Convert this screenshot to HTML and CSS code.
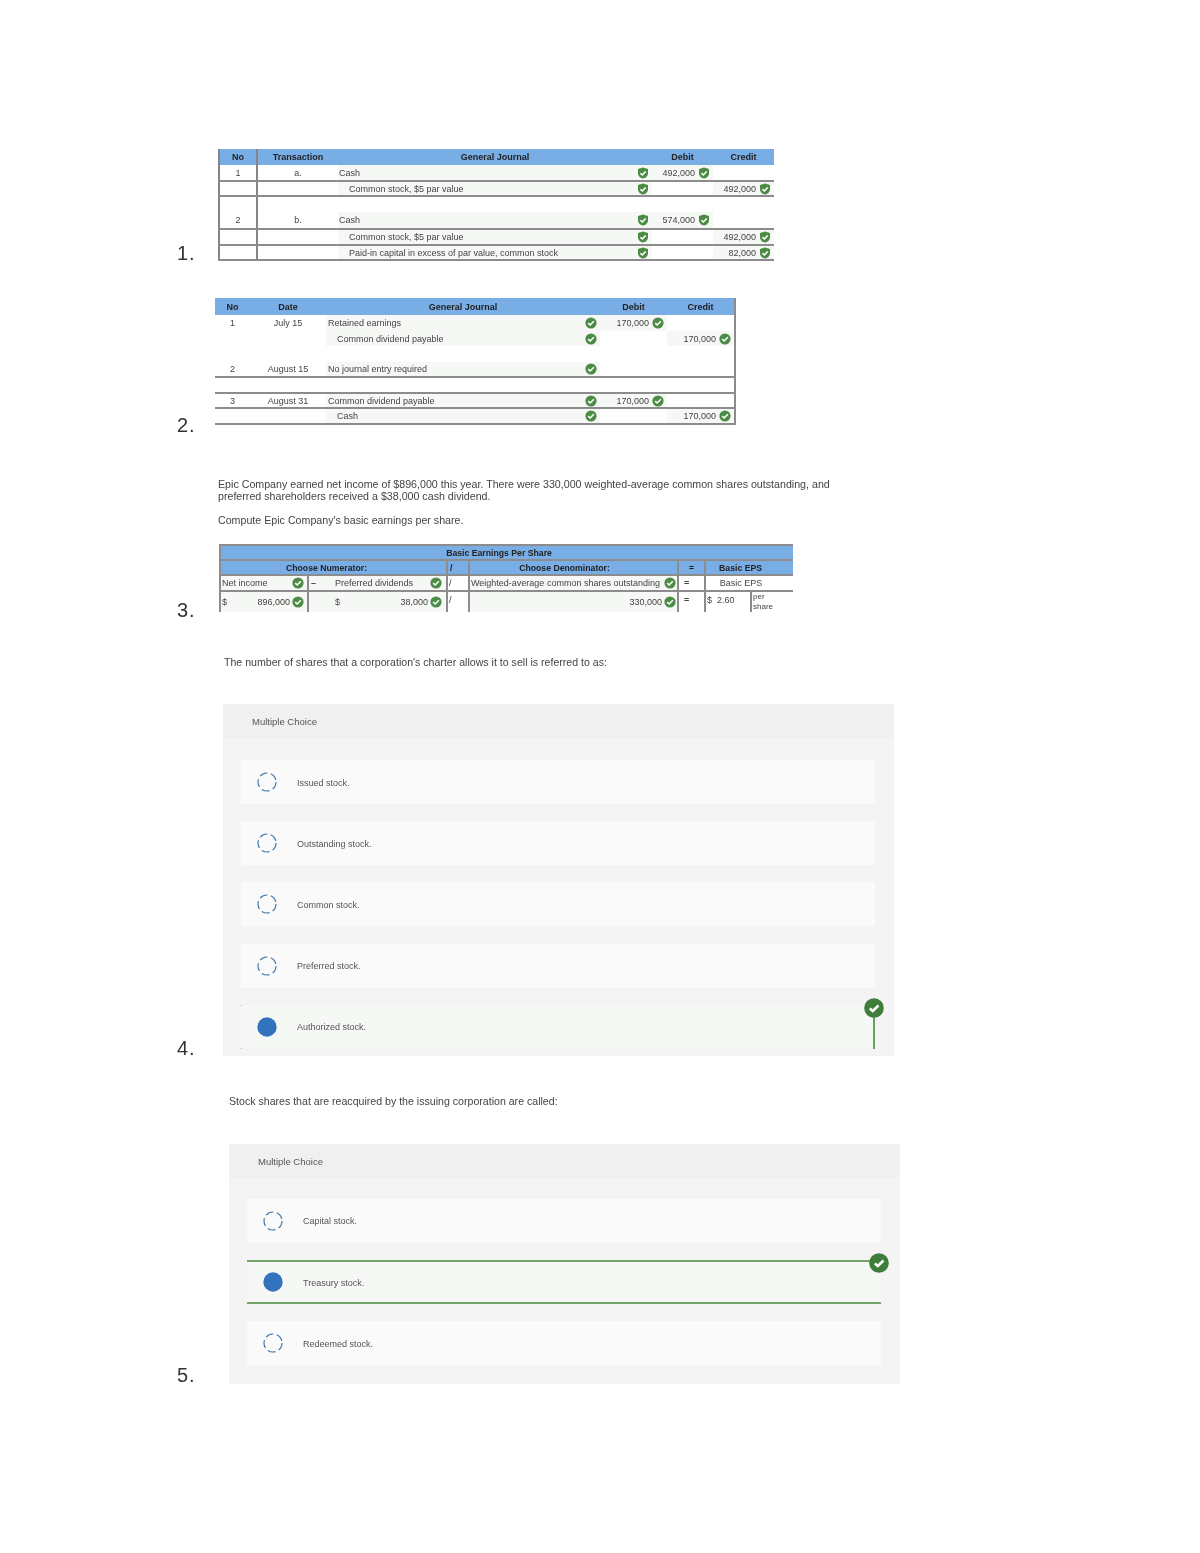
FILE: index.html
```html
<!DOCTYPE html>
<html lang="en">
<head>
<meta charset="utf-8">
<title>Stock and dividends answers</title>
<link rel="stylesheet" href="styles.css">
</head>
<body>
<svg class="defs" width="0" height="0" aria-hidden="true">
  <symbol id="ok" viewBox="0 0 12 12"><circle cx="6" cy="6" r="5.6" fill="#4c8c46"/><path d="M3.2 6.2 5.2 8 8.8 4.3" fill="none" stroke="#fff" stroke-width="1.6"/></symbol>
  <symbol id="shield" viewBox="0 0 12 12"><path d="M6 .4 11 2v4.200c0 3-2.400 4.600-5 5.400-2.600-.8-5-2.400-5-5.400V2z" fill="#4c8c46"/><path d="M3.400 6.200 5.300 7.900 8.700 4.400" fill="none" stroke="#fff" stroke-width="1.500"/></symbol>
  <symbol id="pin" viewBox="0 0 20 20"><circle cx="10" cy="10" r="9.800" fill="#3f7d3a"/><path d="M5.800 10.500 8.800 13 14.500 7.500" fill="none" stroke="#fff" stroke-width="2.600"/></symbol>
  <symbol id="off" viewBox="0 0 20 20"><circle cx="10" cy="10" r="9" fill="none" stroke="#3f78ad" stroke-width="1.200" stroke-dasharray="8 3.500"/></symbol>
  <symbol id="on" viewBox="0 0 20 20"><circle cx="10" cy="10" r="9.700" fill="#3373bd"/></symbol>
</svg>
<main class="page">

  <section class="item item-1">
    <div class="marker">1.</div>
    <div class="figure fig-1">
      <table class="journal j1">
        <colgroup><col class="c1-no"><col class="c1-tr"><col class="c1-gj"><col class="c1-dr"><col class="c1-cr"></colgroup>
        <tr class="head"><th>No</th><th class="sep">Transaction</th><th>General Journal</th><th>Debit</th><th>Credit</th></tr>
        <tr class="r ruled h16"><td class="ctr">1</td><td class="ctr sep">a.</td><td class="in"><div class="acct"><span>Cash</span><svg class="ic"><use href="#shield"/></svg></div></td><td class="in"><div class="amt">492,000<svg class="ic"><use href="#shield"/></svg></div></td><td></td></tr>
        <tr class="r ruled h15"><td></td><td class="sep"></td><td class="in"><div class="acct ind"><span>Common stock, $5 par value</span><svg class="ic"><use href="#shield"/></svg></div></td><td></td><td class="in"><div class="amt">492,000<svg class="ic"><use href="#shield"/></svg></div></td></tr>
        <tr class="gap h16"><td></td><td class="sep"></td><td></td><td></td><td></td></tr>
        <tr class="r ruled h17"><td class="ctr">2</td><td class="ctr sep">b.</td><td class="in"><div class="acct"><span>Cash</span><svg class="ic"><use href="#shield"/></svg></div></td><td class="in"><div class="amt">574,000<svg class="ic"><use href="#shield"/></svg></div></td><td></td></tr>
        <tr class="r ruled h16"><td></td><td class="sep"></td><td class="in"><div class="acct ind"><span>Common stock, $5 par value</span><svg class="ic"><use href="#shield"/></svg></div></td><td></td><td class="in"><div class="amt">492,000<svg class="ic"><use href="#shield"/></svg></div></td></tr>
        <tr class="r ruled h15"><td></td><td class="sep"></td><td class="in"><div class="acct ind"><span>Paid-in capital in excess of par value, common stock</span><svg class="ic"><use href="#shield"/></svg></div></td><td></td><td class="in"><div class="amt">82,000<svg class="ic"><use href="#shield"/></svg></div></td></tr>
      </table>
    </div>
  </section>

  <section class="item item-2">
    <div class="marker">2.</div>
    <div class="figure fig-2">
      <table class="journal j2">
        <colgroup><col class="c2-no"><col class="c2-dt"><col class="c2-gj"><col class="c2-dr"><col class="c2-cr"></colgroup>
        <tr class="head"><th>No</th><th>Date</th><th>General Journal</th><th>Debit</th><th>Credit</th></tr>
        <tr class="r h16"><td class="ctr">1</td><td class="ctr">July 15</td><td class="in"><div class="acct"><span>Retained earnings</span><svg class="ic"><use href="#ok"/></svg></div></td><td class="in"><div class="amt">170,000<svg class="ic"><use href="#ok"/></svg></div></td><td></td></tr>
        <tr class="r h15"><td></td><td></td><td class="in"><div class="acct ind"><span>Common dividend payable</span><svg class="ic"><use href="#ok"/></svg></div></td><td></td><td class="in"><div class="amt">170,000<svg class="ic"><use href="#ok"/></svg></div></td></tr>
        <tr class="gap h16"><td></td><td></td><td></td><td></td><td></td></tr>
        <tr class="r ruled h15"><td class="ctr">2</td><td class="ctr">August 15</td><td class="in"><div class="acct"><span>No journal entry required</span><svg class="ic"><use href="#ok"/></svg></div></td><td></td><td></td></tr>
        <tr class="gap ruled h16"><td></td><td></td><td></td><td></td><td></td></tr>
        <tr class="r ruled h15"><td class="ctr">3</td><td class="ctr">August 31</td><td class="in"><div class="acct"><span>Common dividend payable</span><svg class="ic"><use href="#ok"/></svg></div></td><td class="in"><div class="amt">170,000<svg class="ic"><use href="#ok"/></svg></div></td><td></td></tr>
        <tr class="r ruled h16"><td></td><td></td><td class="in"><div class="acct ind"><span>Cash</span><svg class="ic"><use href="#ok"/></svg></div></td><td></td><td class="in"><div class="amt">170,000<svg class="ic"><use href="#ok"/></svg></div></td></tr>
      </table>
    </div>
  </section>

  <section class="item item-3">
    <div class="marker">3.</div>
    <div class="figure fig-3">
      <p class="prose">Epic Company earned net income of $896,000 this year. There were 330,000 weighted-average common shares outstanding, and preferred shareholders received a $38,000 cash dividend.</p>
      <p class="prose compute">Compute Epic Company's basic earnings per share.</p>
      <div class="clip">
        <table class="eps">
          <colgroup><col class="c3-a"><col class="c3-b"><col class="c3-s"><col class="c3-d"><col class="c3-e"><col class="c3-f"><col class="c3-g"></colgroup>
          <tr class="band"><th colspan="7" class="title">Basic Earnings Per Share</th></tr>
          <tr class="band"><th colspan="2" class="num">Choose Numerator:</th><th class="tl">/</th><th class="den">Choose Denominator:</th><th>=</th><th colspan="2" class="res">Basic EPS</th></tr>
          <tr class="row-l">
            <td class="in"><div class="eq"><span>Net income</span><svg class="ic"><use href="#ok"/></svg></div></td>
            <td class="in"><div class="eq pre"><span class="minus">–</span><span class="fill">Preferred dividends</span><svg class="ic"><use href="#ok"/></svg></div></td>
            <td>/</td>
            <td class="in"><div class="eq den-cell"><span>Weighted-average common shares outstanding</span><svg class="ic"><use href="#ok"/></svg></div></td>
            <td class="noleft">=</td>
            <td colspan="2" class="ctr res">Basic EPS</td>
          </tr>
          <tr class="row-v">
            <td class="in"><div class="eq"><span>$</span><span class="fill rt">896,000</span><svg class="ic"><use href="#ok"/></svg></div></td>
            <td class="in"><div class="eq pre"><span class="minus"></span><span>$</span><span class="fill rt">38,000</span><svg class="ic"><use href="#ok"/></svg></div></td>
            <td>/</td>
            <td class="in"><div class="eq den-cell"><span class="fill rt">330,000</span><svg class="ic"><use href="#ok"/></svg></div></td>
            <td class="noleft">=</td>
            <td>$&nbsp; 2.60</td>
            <td class="small">per<br>share</td>
          </tr>
        </table>
      </div>
    </div>
  </section>

  <section class="item item-4">
    <div class="marker">4.</div>
    <div class="figure fig-4">
      <p class="ask">The number of shares that a corporation's charter allows it to sell is referred to as:</p>
      <div class="panel">
        <div class="panel-head">Multiple Choice</div>
        <div class="options">
          <div class="opt"><svg class="radio"><use href="#off"/></svg><span>Issued stock.</span></div>
          <div class="opt"><svg class="radio"><use href="#off"/></svg><span>Outstanding stock.</span></div>
          <div class="opt"><svg class="radio"><use href="#off"/></svg><span>Common stock.</span></div>
          <div class="opt"><svg class="radio"><use href="#off"/></svg><span>Preferred stock.</span></div>
          <div class="opt right side"><svg class="radio"><use href="#on"/></svg><span>Authorized stock.</span><svg class="pin"><use href="#pin"/></svg></div>
        </div>
      </div>
    </div>
  </section>

  <section class="item item-5">
    <div class="marker">5.</div>
    <div class="figure fig-5">
      <p class="ask">Stock shares that are reacquired by the issuing corporation are called:</p>
      <div class="panel">
        <div class="panel-head">Multiple Choice</div>
        <div class="options">
          <div class="opt"><svg class="radio"><use href="#off"/></svg><span>Capital stock.</span></div>
          <div class="opt right rules"><svg class="radio"><use href="#on"/></svg><span>Treasury stock.</span><svg class="pin"><use href="#pin"/></svg></div>
          <div class="opt"><svg class="radio"><use href="#off"/></svg><span>Redeemed stock.</span></div>
        </div>
      </div>
    </div>
  </section>

</main>
</body>
</html>
```

FILE: styles.css
```css
* { box-sizing: border-box; }
html, body { margin: 0; background: #fff; }
body { font-family: "Liberation Sans", Arial, sans-serif; color: #333; }
.defs { position: absolute; }
.page { width: 1200px; min-height: 1553px; padding: 149px 0 0 177px; }

.item { display: flex; align-items: flex-end; }
.marker { flex: 0 0 30px; font-size: 20px; line-height: 20px; letter-spacing: 1px; color: #333; filter: blur(.4px); }
.figure { filter: blur(.7px); }

.item-2 { margin-top: 37px; }
.item-3 { margin-top: 53px; }
.item-4 { margin-top: 44px; }
.item-5 { margin-top: 39px; }
.item-1 .marker { margin-bottom: -2px; }
.item-2 .marker { margin-bottom: -10px; }
.item-3 .marker { margin-bottom: -8px; }
.item-4 .marker { margin-bottom: -2px; }
.item-5 .marker { margin-bottom: -1px; }
.fig-1 { margin-left: 11px; }
.fig-2 { margin-left: 8px; }
.fig-3 { margin-left: 11px; }
.fig-4 { margin-left: 16px; }
.fig-5 { margin-left: 22px; }

/* journal tables */
table { border-collapse: collapse; table-layout: fixed; font-size: 9px; }
th, td { padding: 0; }
.journal th { background: #78ade6; color: #222; font-weight: bold; height: 16px; font-size: 9px; line-height: 12px; text-align: center; }
.journal td { vertical-align: middle; color: #444; line-height: 12px; }
.j1 { width: 555px; border-left: 2px solid #858585; }
.j1 .sep { border-left: 2px solid #858585; }
.j2 { width: 520px; border-right: 2px solid #8c8c8c; }
.j2 .head th { height: 17px; }
.c1-no { width: 38px; } .c1-tr { width: 81px; } .c1-gj { width: 314px; } .c1-dr { width: 61px; } .c1-cr { width: 61px; }
.c2-no { width: 35px; } .c2-dt { width: 76px; } .c2-gj { width: 274px; } .c2-dr { width: 67px; } .c2-cr { width: 68px; }
.ruled td { border-bottom: 2px solid #8c8c8c; }
.h15 { height: 15px; } .h16 { height: 16px; } .h17 { height: 17px; }
.ctr { text-align: center; }
.in { background: #f6f8f5; }
.acct { display: flex; justify-content: space-between; align-items: center; height: 12px; padding: 0 3px 0 1px; }
.j2 .acct { padding-left: 2px; }
.acct.ind { padding-left: 11px; }
.amt { display: flex; justify-content: flex-end; align-items: center; gap: 1px; height: 12px; padding-right: 3px; white-space: nowrap; }
.ic { flex: none; width: 12px; height: 12px; margin-left: 2px; }

/* prose */
.prose { margin: 0 0 12px; width: 630px; font-size: 10.670px; line-height: 12px; color: #444; }
.compute { margin-bottom: 18px; }

/* EPS table */
.clip { width: 574px; height: 68px; margin-left: 1px; overflow: hidden; }
.eps { width: 574px; }
.c3-a { width: 88px; } .c3-b { width: 139px; } .c3-s { width: 22px; } .c3-d { width: 209px; } .c3-e { width: 27px; } .c3-f { width: 46px; } .c3-g { width: 43px; }
.eps th, .eps td { border: 2px solid #8c8c8c; }
.band th { background: #78ade6; height: 15px; font-size: 8.700px; line-height: 12px; color: #222; text-align: center; }
.band .title { padding-right: 16px; }
.band .num { padding-right: 14px; }
.band .tl { text-align: left; padding-left: 2px; }
.band .den { padding-right: 18px; }
.band .res { padding-right: 18px; }
.eps td { font-size: 9px; line-height: 12px; color: #444; padding: 0 1px; white-space: nowrap; }
.eps td.res { padding-right: 18px; }
.row-l td { height: 16px; }
.row-v td { height: 22px; vertical-align: top; padding-top: 2px; }
.eq { display: flex; align-items: center; justify-content: space-between; height: 12px; padding-right: 2px; }
.row-v .eq { height: 15px; }
.pre { padding-left: 1px; padding-right: 3px; }
.den-cell { padding-right: 0; }
.minus { flex: 0 0 24px; font-weight: bold; }
.fill { flex: 1; }
.rt { text-align: right; }
.noleft { border-left: 0 !important; }
.eps td.noleft { padding-left: 5px; font-weight: bold; }
.eps td.small { white-space: normal; font-size: 8px; line-height: 10px; padding-top: 0; }

/* multiple choice */
.ask { margin: 0 0 36px; height: 12px; font-size: 10.600px; line-height: 13px; color: #444; }
.fig-4 .ask { padding-left: 1px; }
.panel { width: 671px; background: #f4f4f4; padding-bottom: 7.200px; }
.fig-5 .ask { margin-bottom: 37px; }
.fig-5 .panel { padding-bottom: 18.600px; }
.panel-head { height: 34px; padding-left: 29px; background: #f0f0f0; font-size: 9.500px; line-height: 35px; color: #555; }
.options { display: flex; flex-direction: column; gap: 17.200px; padding: 22px 19px 0 18px; }
.fig-5 .options { padding-top: 21px; }
.opt { position: relative; display: flex; align-items: center; gap: 20px; height: 44px; padding-left: 16px; background: #fafafa; font-size: 9px; line-height: 12px; color: #555; }
.opt span { padding-top: 1px; }
.radio { flex: none; width: 20px; height: 20px; }
.right { background: #f5f8f5; }
.rules { border-top: 2px solid #74a36a; border-bottom: 2px solid #74a36a; }
.side { border-right: 2px solid #6d9e62; }
.side::before, .side::after { content: ""; position: absolute; left: 0; width: 1px; height: 1px; background: #9dbf94; }
.side::before { top: 0; }
.side::after { bottom: 0; }
.pin { position: absolute; width: 20px; height: 20px; }
.side .pin { right: -11px; top: -7px; }
.rules .pin { right: -8px; top: -9px; }
```
